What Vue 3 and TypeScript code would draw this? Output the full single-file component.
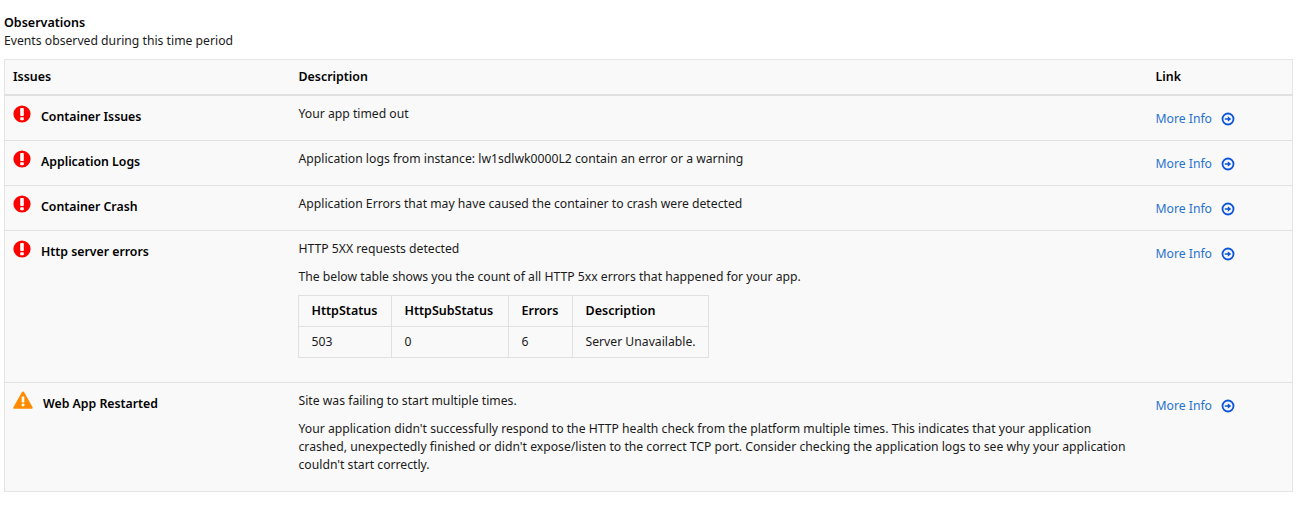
<script setup lang="ts">
interface Issue {
  level: 'error' | 'warn'
  name: string
  lines: string[]
  table?: boolean
}
const issues: Issue[] = [
  { level: 'error', name: 'Container Issues', lines: ['Your app timed out'] },
  { level: 'error', name: 'Application Logs', lines: ['Application logs from instance: lw1sdlwk0000L2 contain an error or a warning'] },
  { level: 'error', name: 'Container Crash', lines: ['Application Errors that may have caused the container to crash were detected'] },
  { level: 'error', name: 'Http server errors', lines: ['HTTP 5XX requests detected', 'The below table shows you the count of all HTTP 5xx errors that happened for your app.'], table: true },
  { level: 'warn', name: 'Web App Restarted', lines: ['Site was failing to start multiple times.', "Your application didn't successfully respond to the HTTP health check from the platform multiple times. This indicates that your application crashed, unexpectedly finished or didn't expose/listen to the correct TCP port. Consider checking the application logs to see why your application couldn't start correctly."] },
]
</script>

<template>
  <div class="page">
    <h1 class="title">Observations</h1>
    <p class="subtitle">Events observed during this time period</p>
    <table class="grid">
      <colgroup>
        <col class="c1" />
        <col class="c2" />
        <col class="c3" />
      </colgroup>
      <thead>
        <tr>
          <th>Issues</th>
          <th>Description</th>
          <th>Link</th>
        </tr>
      </thead>
      <tbody>
        <tr v-for="issue in issues" :key="issue.name">
          <td class="issue">
            <div class="issue-in" :class="issue.level">
              <svg v-if="issue.level === 'error'" class="icon" viewBox="0 0 18 18" width="18" height="18">
                <circle cx="9" cy="9" r="8.6" fill="#ff0000" />
                <rect x="7.2" y="3" width="3.6" height="8" rx="0.8" fill="#fff" />
                <rect x="7.2" y="12.2" width="3.6" height="3" rx="0.8" fill="#fff" />
              </svg>
              <svg v-else class="icon warn-icon" viewBox="0 0 20 18" width="20" height="18">
                <path d="M10 0.4c.5 0 .9.3 1.2.8l8.4 15c.4.8-.1 1.6-1 1.6H1.4c-.9 0-1.4-.8-1-1.6l8.4-15c.3-.5.7-.8 1.2-.8z" fill="#ff8c00" />
                <rect x="8.7" y="5.5" width="2.6" height="6" rx="0.5" fill="#fff" />
                <rect x="8.7" y="12.8" width="2.6" height="2.4" rx="0.5" fill="#fff" />
              </svg>
              <strong>{{ issue.name }}</strong>
            </div>
          </td>
          <td class="desc">
            <p v-for="line in issue.lines" :key="line">{{ line }}</p>
            <table v-if="issue.table" class="inner">
              <colgroup>
                <col class="i1" />
                <col class="i2" />
                <col class="i3" />
                <col class="i4" />
              </colgroup>
              <thead>
                <tr>
                  <th>HttpStatus</th>
                  <th>HttpSubStatus</th>
                  <th>Errors</th>
                  <th>Description</th>
                </tr>
              </thead>
              <tbody>
                <tr>
                  <td>503</td>
                  <td>0</td>
                  <td>6</td>
                  <td>Server Unavailable.</td>
                </tr>
              </tbody>
            </table>
          </td>
          <td class="link">
            <a href="#" @click.prevent>
              More Info
              <svg viewBox="0 0 14 14" width="14" height="14" class="arrow">
                <circle cx="7" cy="7" r="5.5" fill="none" stroke="#0b55dc" stroke-width="1.8" />
                <path d="M3.8 6.2h3V4.2L10.2 7 6.8 9.8V7.8h-3z" fill="#0b55dc" />
              </svg>
            </a>
          </td>
        </tr>
      </tbody>
    </table>
  </div>
</template>

<style scoped>
.page {
  width: 1288px;
  padding: 14px 14px 0 4px;
  font-family: "Noto Sans", "Open Sans", sans-serif;
  font-size: 12.2px;
  line-height: 18px;
  color: #1a1a1a;
}
.title {
  margin: 0;
  font-size: 12.5px;
  font-weight: 600;
  line-height: 17px;
  color: #000;
}
.subtitle {
  margin: 1px 0 9px;
  line-height: 18px;
}
.grid {
  width: 1288px;
  table-layout: fixed;
  border-collapse: collapse;
  background: #f9f9f9;
  border: 1px solid #e5e5e5;
}
.c1 { width: 286px; }
.c2 { width: 857px; }
.c3 { width: 145px; }
.grid > thead > tr > th {
  height: 34px;
  padding: 0 8px;
  text-align: left;
  font-size: 12.4px;
  font-weight: 600;
  color: #000;
  border-bottom: 2px solid #e0e0e0;
}
.grid > tbody > tr > td {
  vertical-align: top;
  padding: 0 8px;
  border-bottom: 1px solid #e0e0e0;
}
.grid > tbody > tr:last-child > td {
  border-bottom: 0;
}
.issue-in {
  display: flex;
  align-items: flex-start;
  padding-top: 9px;
  gap: 10px;
  font-size: 12.3px;
  font-weight: 600;
  color: #000;
}
.issue-in strong {
  font-weight: 600;
  padding-top: 3px;
}
.icon {
  flex: none;
}
.warn-icon {
  margin-top: -1px;
}
.grid > tbody > tr > td.desc {
  padding-top: 9px;
  padding-bottom: 17px;
}
.desc p {
  margin: 0;
}
.desc p + p {
  margin-top: 10px;
}
.link a {
  display: inline-flex;
  align-items: center;
  gap: 9px;
  margin-top: 14px;
  color: #2672d0;
  text-decoration: none;
}
.inner {
  border-collapse: collapse;
  table-layout: fixed;
  width: 410px;
  margin: 9px 0 7px -1px;
}
.i1 { width: 93px; }
.i2 { width: 117px; }
.i3 { width: 64px; }
.i4 { width: 136px; }
.inner th,
.inner td {
  border: 1px solid #e0e0e0;
  padding: 0 13px;
  height: 30px;
  text-align: left;
  white-space: nowrap;
}
.inner th {
  font-size: 12.5px;
  font-weight: 600;
  color: #000;
}
</style>
